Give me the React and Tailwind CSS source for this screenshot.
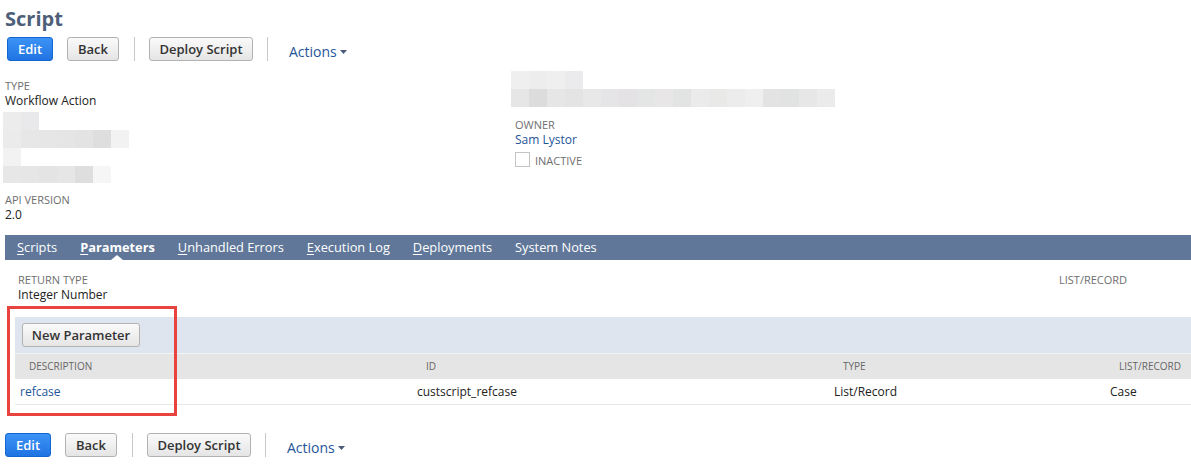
import React from "react";

const font = { fontFamily: '"Open Sans", "Noto Sans", sans-serif' };

function Btn({ children, primary, className = "" }) {
  return primary ? (
    <button className={`h-6 whitespace-nowrap rounded-[3px] border border-[#1467cf] bg-gradient-to-b from-[#3d93f5] to-[#1f74e3] text-[13px] font-semibold leading-none text-white ${className}`}>
      {children}
    </button>
  ) : (
    <button className={`h-6 whitespace-nowrap rounded-[3px] border border-[#b2b2b2] bg-gradient-to-b from-[#fafafa] to-[#e5e5e5] text-[13px] font-semibold leading-none text-[#333] ${className}`}>
      {children}
    </button>
  );
}

function ButtonBar() {
  return (
    <div className="flex h-6 items-center">
      <Btn primary className="w-[46px]">Edit</Btn>
      <Btn className="ml-[14px] w-[52px]">Back</Btn>
      <div className="ml-[15px] h-6 w-px bg-[#c8c8c8]" />
      <Btn className="ml-[14px] w-[104px]">Deploy Script</Btn>
      <div className="ml-[14px] h-6 w-px bg-[#c8c8c8]" />
      <div className="ml-[21px] flex items-center whitespace-nowrap pt-[4px] text-[14px] text-[#255599]">
        Actions
        <svg width="8" height="5" viewBox="0 0 8 5" className="ml-[3px] mt-[2px]">
          <path d="M0 0h7L3.5 4z" fill="#4a5a7a" />
        </svg>
      </div>
    </div>
  );
}

function Label({ children, className = "" }) {
  return <div className={`text-[11px] uppercase leading-[14px] text-[#6f6f6f] ${className}`}>{children}</div>;
}

function Blur({ w, h, shades, className = "" }) {
  return (
    <div className={`flex ${className}`} style={{ width: w, height: h }}>
      {shades.map((c, i) => (
        <div key={i} className="h-full flex-1" style={{ backgroundColor: c }} />
      ))}
    </div>
  );
}

const tabs = [
  ["S", "cripts"],
  ["P", "arameters"],
  ["U", "nhandled Errors"],
  ["E", "xecution Log"],
  ["D", "eployments"],
  ["", "System Notes"],
];

export default function App() {
  return (
    <div className="h-[470px] w-[1191px] overflow-hidden bg-white text-[#222]" style={font}>
      <div className="pl-[5px] pt-[5px]">
        <h1 className="text-[20px] font-bold leading-[27px] text-[#4d5f79]">Script</h1>
      </div>
      <div className="mt-[5px] pl-[7px]">
        <ButtonBar />
      </div>

      <div className="mt-[10px] flex">
        <div className="w-[506px] pl-[5px] pt-[8px]">
          <Label>Type</Label>
          <div className="text-[12px] leading-[16px] text-[#222]">Workflow Action</div>
          <div className="-ml-[2px] mt-[3px]">
            <Blur w={36} h={18} shades={["#ececec", "#e9e9ec"]} />
            <Blur w={126} h={18} shades={["#ebebeb", "#e7e7e7", "#e6e6e6", "#e5e5e5", "#e3e3e3", "#dedede", "#f2f2f2"]} />
            <Blur w={18} h={18} shades={["#f2f2f2"]} />
            <Blur w={108} h={17} shades={["#e7e7e7", "#e6e6e6", "#e4e4e4", "#e6e6e6", "#dedede", "#f6f6f6"]} />
          </div>
          <Label className="mt-[10px]">API Version</Label>
          <div className="text-[12px] leading-[16px]">2.0</div>
        </div>
        <div className="pl-[5px]">
          <div>
            <Blur w={72} h={18} shades={["#efefef", "#ededed", "#efefef", "#ebebed"]} />
            <Blur
              w={324}
              h={18}
              shades={["#e6e6e6", "#dcdcdc", "#e6e6e6", "#e4e4e4", "#e8e8e8", "#e5e5e7", "#e4e2e4", "#e4e5e5", "#e8e6e6", "#e2e4e4", "#ebebeb", "#e9e9e7", "#ececec", "#efefef", "#e3e3e3", "#e1e2e2", "#e7e7e7", "#ebebeb"]}
            />
          </div>
          <Label className="mt-[11px] pl-[4px]">Owner</Label>
          <div className="pl-[4px] text-[12px] leading-[16px] text-[#255599]">Sam Lystor</div>
          <div className="mt-[4px] flex items-end pl-[4px]">
            <div className="h-[15px] w-[15px] border border-[#c4c4c4] bg-white" />
            <span className="ml-[5px] text-[11px] leading-[13px] text-[#6f6f6f]">INACTIVE</span>
          </div>
        </div>
      </div>

      <div className="ml-[5px] mt-[12px] flex h-[25px] items-center bg-[#607799] pl-[12px] text-[12.8px] text-white">
        {tabs.map(([u, rest], i) => (
          <div key={i} className={`relative mr-[23px] whitespace-nowrap leading-[25px] ${i === 1 ? "font-bold" : ""}`}>
            {u && <span className="underline decoration-1 underline-offset-2">{u}</span>}
            {rest}
            {i === 1 && (
              <div className="absolute bottom-0 left-1/2 h-0 w-0 -translate-x-1/2 border-x-[6px] border-b-[5px] border-x-transparent border-b-white" />
            )}
          </div>
        ))}
      </div>

      <div className="flex pt-[13px]">
        <div className="w-[1054px] pl-[18px]">
          <Label>Return Type</Label>
          <div className="text-[12px] leading-[16px]">Integer Number</div>
        </div>
        <div className="pl-[5px]">
          <Label>List/Record</Label>
        </div>
      </div>

      <div className="relative ml-[15px] mt-[14px]">
        <div className="flex h-[37px] items-center border-b border-[#f0f3f7] bg-[#dfe5ee] pl-[7px]">
          <Btn className="w-[118px]">New Parameter</Btn>
        </div>
        <div className="grid h-[25px] grid-cols-[397px_417px_276px_1fr] items-center bg-[#e5e5e5] text-[10px] uppercase text-[#666]">
          <div className="pl-[14px]">Description</div>
          <div className="pl-[14px]">ID</div>
          <div className="pl-[14px]">Type</div>
          <div className="pr-[10px] text-right">List/Record</div>
        </div>
        <div className="grid h-[26px] grid-cols-[397px_417px_276px_1fr] items-center border-b border-[#e8e8e8] text-[12px]">
          <div className="pl-[5px] text-[#255599]">refcase</div>
          <div className="pl-[5px]">custscript_refcase</div>
          <div className="pl-[5px]">List/Record</div>
          <div className="pl-[5px]">Case</div>
        </div>
        <div className="pointer-events-none absolute -left-[8px] -top-[11px] h-[110px] w-[170px] border-[3px] border-[#e8433f]" />
      </div>

      <div className="mt-[28px] pl-[5px]">
        <ButtonBar />
      </div>
    </div>
  );
}
